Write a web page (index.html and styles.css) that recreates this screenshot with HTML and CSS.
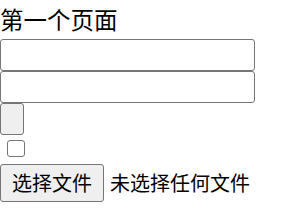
FILE: index.html
```html
<!DOCTYPE html>
<html lang="zh-CN">
<head>
<meta charset="utf-8">
<title>第一个页面</title>
<link rel="stylesheet" href="styles.css">
</head>
<body>
<div class="page">
  <div class="title">第一个页面</div>
  <input class="text-input" type="text">
  <input class="text-input" type="text">
  <button class="empty-btn" type="button"></button>
  <input class="check" type="checkbox">
  <div class="file-row">
    <button class="file-btn" type="button">选择文件</button>
    <span class="file-label">未选择任何文件</span>
  </div>
</div>
</body>
</html>
```
FILE: styles.css
```css
html, body {
  margin: 0;
  padding: 0;
  background: #ffffff;
}
.page {
  display: flex;
  flex-direction: column;
  align-items: flex-start;
  font-family: "Noto Sans CJK SC", "Noto Sans", sans-serif;
  color: #000000;
}
.title {
  font-size: 23.5px;
  line-height: 39px;
  height: 39px;
  padding-left: 0;
}
.text-input {
  appearance: none;
  margin: 0;
  box-sizing: border-box;
  width: 255px;
  height: 32px;
  border: 1px solid #767676;
  border-radius: 3px;
  background: #ffffff;
  padding: 0 3px;
}
.empty-btn {
  appearance: none;
  margin: 0;
  box-sizing: border-box;
  width: 24px;
  height: 32px;
  border: 1px solid #767676;
  border-radius: 3px;
  background: #efefef;
  padding: 0;
}
.check {
  appearance: none;
  box-sizing: border-box;
  width: 18px;
  height: 17px;
  margin: 5px 0 0 7px;
  border: 1px solid #767676;
  border-radius: 3px;
  background: #ffffff;
}
.file-row {
  display: flex;
  align-items: center;
  gap: 6px;
  margin-top: 7px;
}
.file-btn {
  appearance: none;
  margin: 0;
  box-sizing: border-box;
  height: 38px;
  width: 104px;
  border: 1px solid #767676;
  border-radius: 3px;
  background: #efefef;
  font-family: "Noto Sans CJK SC", "Noto Sans", sans-serif;
  font-size: 20px;
  line-height: 1;
  color: #000000;
  padding: 0;
}
.file-label {
  font-size: 20px;
  line-height: 1;
}
```
